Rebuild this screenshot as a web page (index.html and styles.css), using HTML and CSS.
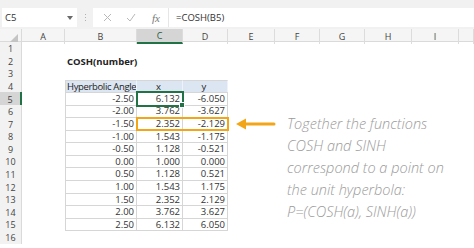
FILE: index.html
```html
<!DOCTYPE html>
<html lang="en">
<head>
    <meta charset="UTF-8">
    <title>COSH function</title>
    <link rel="stylesheet" href="styles.css">
</head>
<body>
    <div class="app">
        <div class="topbar"></div>
        <div class="formula-bar">
            <div class="name-box">
                <span>C5</span>
                <svg class="caret" width="6" height="4" viewBox="0 0 6 4"><path d="M0 0 L6 0 L3 4 Z" fill="#6a6a6a"/></svg>
            </div>
            <div class="grip">
                <span></span><span></span><span></span>
            </div>
            <div class="fx-area">
                <svg class="tool" width="9" height="9" viewBox="0 0 9 9"><path d="M1 1 L8 8 M8 1 L1 8" stroke="#b8b8b8" stroke-width="1"/></svg>
                <svg class="tool" width="10" height="9" viewBox="0 0 10 9"><path d="M1 5 L4 8 L9 1" stroke="#b8b8b8" stroke-width="1" fill="none"/></svg>
                <span class="fx">fx</span>
                <div class="formula">=COSH(B5)</div>
            </div>
        </div>
        <div class="sheet">
            <div class="row heads">
                <div class="corner"><svg width="8" height="8" viewBox="0 0 8 8"><path d="M8 0 L8 8 L0 8 Z" fill="#c4c4c4"/></svg></div>
                <div class="ch">A</div>
                <div class="ch">B</div>
                <div class="ch active">C</div>
                <div class="ch">D</div>
                <div class="ch">E</div>
                <div class="ch">F</div>
                <div class="ch">G</div>
                <div class="ch">H</div>
                <div class="ch">I</div>
                <div class="ch"></div>
            </div>
            <div class="row"><div class="rh">1</div></div>
            <div class="row"><div class="rh">2</div><div></div><div class="title">COSH(number)</div></div>
            <div class="row"><div class="rh">3</div></div>
            <div class="row">
                <div class="rh">4</div><div></div>
                <div class="cell th first">Hyperbolic Angle</div>
                <div class="cell th center">x</div>
                <div class="cell th center">y</div>
            </div>
            <div class="row">
                <div class="rh active">5</div><div></div>
                <div class="cell first">-2.50</div>
                <div class="cell sel">6.132</div>
                <div class="cell">-6.050</div>
            </div>
            <div class="row">
                <div class="rh">6</div><div></div>
                <div class="cell first">-2.00</div>
                <div class="cell">3.762</div>
                <div class="cell">-3.627</div>
            </div>
            <div class="row">
                <div class="rh">7</div><div></div>
                <div class="cell first">-1.50</div>
                <div class="cell">2.352</div>
                <div class="cell">-2.129</div>
            </div>
            <div class="row">
                <div class="rh">8</div><div></div>
                <div class="cell first">-1.00</div>
                <div class="cell">1.543</div>
                <div class="cell">-1.175</div>
            </div>
            <div class="row">
                <div class="rh">9</div><div></div>
                <div class="cell first">-0.50</div>
                <div class="cell">1.128</div>
                <div class="cell">-0.521</div>
            </div>
            <div class="row">
                <div class="rh">10</div><div></div>
                <div class="cell first">0.00</div>
                <div class="cell">1.000</div>
                <div class="cell">0.000</div>
            </div>
            <div class="row">
                <div class="rh">11</div><div></div>
                <div class="cell first">0.50</div>
                <div class="cell">1.128</div>
                <div class="cell">0.521</div>
            </div>
            <div class="row">
                <div class="rh">12</div><div></div>
                <div class="cell first">1.00</div>
                <div class="cell">1.543</div>
                <div class="cell">1.175</div>
            </div>
            <div class="row">
                <div class="rh">13</div><div></div>
                <div class="cell first">1.50</div>
                <div class="cell">2.352</div>
                <div class="cell">2.129</div>
            </div>
            <div class="row">
                <div class="rh">14</div><div></div>
                <div class="cell first">2.00</div>
                <div class="cell">3.762</div>
                <div class="cell">3.627</div>
            </div>
            <div class="row">
                <div class="rh">15</div><div></div>
                <div class="cell first">2.50</div>
                <div class="cell">6.132</div>
                <div class="cell">6.050</div>
            </div>
            <div class="row"><div class="rh">16</div></div>

            <!-- callout over the sheet, anchored at cell C7 -->
            <div class="callout">
                <div class="highlight"></div>
                <svg class="arrow" width="40" height="12" viewBox="0 0 40 12">
                    <path d="M0 6 L10 0.5 L10 11.5 Z" fill="#f2a516"/>
                    <path d="M8 6 L38 6" stroke="#f2a516" stroke-width="3" stroke-linecap="round"/>
                </svg>
                <div class="note">
                    Together the functions<br>
                    COSH and SINH<br>
                    correspond to a point on<br>
                    the unit hyperbola:<br>
                    P=(COSH(a), SINH(a))
                </div>
            </div>
        </div>
    </div>
</body>
</html>
```

FILE: styles.css
```css
body {
    margin: 0;
    background: #fff;
    font-family: 'Open Sans', sans-serif;
    color: #2b2b2b;
}
.app {
    width: 474px;
    height: 248px;
    overflow: hidden;
}
.topbar {
    height: 8px;
    background: #f1f1f1;
}
.formula-bar {
    display: flex;
    align-items: stretch;
    height: 19px;
    background: #f1f1f1;
    padding-bottom: 2px;
}
.name-box {
    display: flex;
    align-items: center;
    justify-content: space-between;
    width: 68px;
    margin-left: 2px;
    padding: 0 4px 0 3px;
    background: #fff;
    font-size: 9.5px;
    color: #333;
}
.grip {
    display: flex;
    flex-direction: column;
    justify-content: center;
    gap: 2px;
    width: 16px;
    align-items: center;
}
.grip span {
    width: 1px;
    height: 1px;
    background: #b0b0b0;
}
.fx-area {
    flex: 1;
    display: flex;
    align-items: center;
    background: #fff;
    padding-left: 10px;
}
.tool {
    margin-right: 14px;
}
.fx {
    font-family: 'Liberation Serif', serif;
    font-style: italic;
    font-size: 11px;
    color: #777;
    margin-left: 2px;
    width: 14px;
}
.formula {
    flex: 1;
    align-self: stretch;
    display: flex;
    align-items: center;
    margin-left: 2px;
    padding-left: 7px;
    border-left: 1px solid #e6e6e6;
    font-size: 9.5px;
    color: #333;
}
.sheet {
    position: relative;
    width: 474px;
}
.row {
    display: grid;
    grid-template-columns: 22px 43px 72px 46px 45px 47px 45px 45px 47px 47px 15px;
    height: 12.6px;
}
.row.heads {
    height: 13px;
    background: #f5f5f5;
    border-bottom: 1px solid #dadada;
    box-sizing: border-box;
}
.corner {
    display: flex;
    align-items: flex-end;
    justify-content: flex-end;
    padding: 0 3px 2px 0;
    border-right: 1px solid #dadada;
}
.ch {
    display: flex;
    align-items: center;
    justify-content: center;
    font-size: 9px;
    color: #444;
    border-right: 1px solid #dcdcdc;
}
.ch.active {
    background: #d5d5d5;
    border-bottom: 2px solid #217346;
    color: #2a5d3e;
}
.rh {
    display: flex;
    align-items: center;
    justify-content: center;
    font-size: 9px;
    color: #444;
    background: #f2f2f2;
    border-right: 1px solid #dadada;
}
.rh.active {
    background: #d5d5d5;
    border-right: 2px solid #217346;
}
.title {
    grid-column: span 2;
    display: flex;
    align-items: center;
    padding-left: 2px;
    font-size: 9.5px;
    font-weight: bold;
    color: #222;
    white-space: nowrap;
}
.cell {
    display: flex;
    align-items: center;
    justify-content: flex-end;
    padding-right: 2px;
    font-size: 9.5px;
    color: #333;
    border-right: 1px solid #d6d6d6;
    border-bottom: 1px solid #d6d6d6;
    box-sizing: border-box;
    white-space: nowrap;
    overflow: hidden;
}
.cell.first {
    border-left: 1px solid #d6d6d6;
}
.cell.th {
    background: #dce6f2;
    border-top: 1px solid #d6d6d6;
    border-right-color: #eef3f9;
    color: #222;
}
.cell.th.first {
    justify-content: flex-start;
    padding-left: 1px;
    letter-spacing: -0.35px;
}
.cell.center {
    justify-content: center;
}
.cell.sel {
    position: relative;
    overflow: visible;
    outline: 2px solid #217346;
    outline-offset: -1px;
}
.cell.sel::after {
    content: '';
    position: absolute;
    right: -3px;
    bottom: -3px;
    width: 4px;
    height: 4px;
    background: #217346;
    border: 1px solid #fff;
}
.callout {
    position: absolute;
    left: 136px;
    top: 88px;
    display: flex;
    align-items: flex-start;
}
.highlight {
    flex: none;
    width: 93px;
    height: 14px;
    border: 2px solid #f2a516;
    box-sizing: border-box;
}
.arrow {
    flex: none;
    margin: 1px 0 0 7px;
}
.note {
    flex: none;
    margin: -4px 0 0 11px;
    font-family: 'Open Sans', sans-serif;
    font-style: italic;
    font-weight: 300;
    font-size: 14.5px;
    line-height: 22px;
    color: #9a9a9a;
    white-space: nowrap;
}
```
